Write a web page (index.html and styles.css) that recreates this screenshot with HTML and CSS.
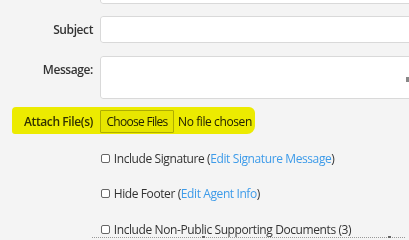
FILE: index.html
```html
<!DOCTYPE html>
<html lang="en">
<head>
    <meta charset="UTF-8">
    <meta name="viewport" content="width=device-width, initial-scale=1.0">
    <title>Reply</title>
    <link rel="stylesheet" href="styles.css">
</head>
<body>
    <div class="form">
        <div class="row row-top">
            <span class="lbl"></span>
            <div class="cell"><input class="field" type="text"></div>
        </div>
        <div class="row row-subject">
            <label class="lbl">Subject</label>
            <div class="cell"><input class="field" type="text"></div>
        </div>
        <div class="row row-msg">
            <label class="lbl">Message:</label>
            <div class="cell area-wrap">
                <textarea class="field area"></textarea>
                <span class="scroll-mark"></span>
            </div>
        </div>
        <div class="row row-attach">
            <label class="lbl">Attach File(s)</label>
            <div class="file">
                <button class="file-btn" type="button">Choose Files</button>
                <span class="file-name">No file chosen</span>
            </div>
            <span class="highlight"></span>
        </div>
        <div class="opts">
            <label class="opt"><input type="checkbox"> Include Signature (<a href="#">Edit Signature Message</a>)</label>
            <label class="opt"><input type="checkbox"> Hide Footer (<a href="#">Edit Agent Info</a>)</label>
            <label class="opt"><input type="checkbox"> Include Non-Public Supporting Documents (3)</label>
        </div>
        <div class="divider">
            <span class="handle h1"></span>
            <span class="handle h2"></span>
        </div>
    </div>
</body>
</html>
```

FILE: styles.css
```css
body {
    margin: 0;
    background-color: #f4f4f4;
    font-family: "Open Sans", "Noto Sans", sans-serif;
    font-size: 12px;
    letter-spacing: -0.4px;
    color: #333;
    overflow: hidden;
    height: 240px;
}
.form {
    margin-top: -23px;
    overflow: hidden;
}
.row {
    display: grid;
    grid-template-columns: 93px 1fr;
    column-gap: 7px;
    align-items: center;
    position: relative;
}
.lbl {
    text-align: right;
    font-weight: 600;
    font-size: 12px;
    color: #333;
}
.cell {
    overflow: hidden;
    border-radius: 3px 0 0 3px;
}
.field {
    display: block;
    width: 330px;
    height: 27px;
    box-sizing: border-box;
    border: 1px solid #d9d9d9;
    border-radius: 3px;
    background-color: white;
    margin: 0;
    font: inherit;
}
.row-subject {
    margin-top: 12px;
}
.row-msg {
    margin-top: 13px;
    align-items: start;
}
.row-msg .lbl {
    padding-top: 5px;
}
.area-wrap {
    position: relative;
    height: 43px;
}
.area {
    height: 43px;
    resize: none;
}
.scroll-mark {
    position: absolute;
    left: 306px;
    top: 21px;
    width: 3px;
    height: 5px;
    background-color: #888;
}
.row-attach {
    margin-top: 11px;
}
.file {
    display: flex;
    align-items: center;
    gap: 4px;
}
.file-btn {
    height: 23px;
    width: 74px;
    padding: 0;
    border: 1px solid #b5b5b5;
    border-radius: 1px;
    background-color: #efefef;
    font: inherit;
    font-size: 12px;
    letter-spacing: -0.7px;
    color: #222;
    white-space: nowrap;
}
.file-name {
    color: #222;
}
.highlight {
    position: absolute;
    left: 12px;
    top: -3px;
    width: 243px;
    height: 27px;
    background-color: #f7f600;
    mix-blend-mode: multiply;
    border-radius: 4px 6px 8px 3px;
}
.opts {
    margin-left: 100px;
    margin-top: 15px;
    display: flex;
    flex-direction: column;
    gap: 15.5px;
}
.opt {
    display: flex;
    align-items: center;
    height: 20px;
    white-space: pre;
}
.opt input {
    appearance: none;
    width: 9px;
    height: 9px;
    margin: 0 1px 0 1px;
    border: 1px solid #666;
    border-radius: 2px;
    background-color: white;
}
.opt a {
    color: #3d9be9;
    text-decoration: none;
}
.divider {
    position: relative;
    margin: -2px 4px 0 92px;
    border-top: 1px dotted #999;
}
.handle {
    position: absolute;
    top: -2px;
    width: 3px;
    height: 3px;
    background-color: #666;
}
.h1 {
    left: 110px;
}
.h2 {
    left: 296px;
}
```
